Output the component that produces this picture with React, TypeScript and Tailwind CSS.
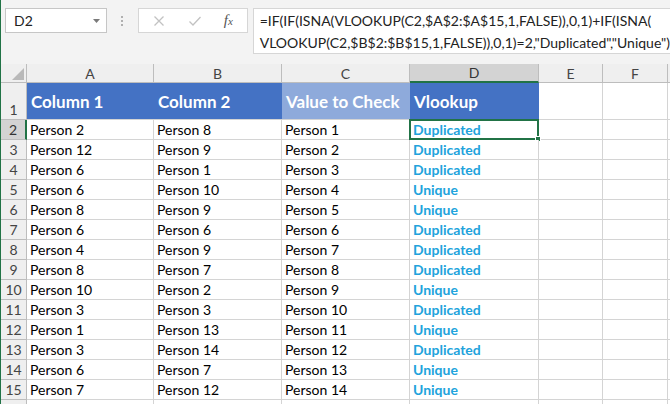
const colA = ['Person 2', 'Person 12', 'Person 6', 'Person 6', 'Person 8', 'Person 6', 'Person 4', 'Person 8', 'Person 10', 'Person 3', 'Person 1', 'Person 3', 'Person 6', 'Person 7']
const colB = ['Person 8', 'Person 9', 'Person 1', 'Person 10', 'Person 9', 'Person 6', 'Person 9', 'Person 7', 'Person 2', 'Person 3', 'Person 13', 'Person 14', 'Person 7', 'Person 12']
const colD = ['Duplicated', 'Duplicated', 'Duplicated', 'Unique', 'Unique', 'Duplicated', 'Duplicated', 'Duplicated', 'Unique', 'Duplicated', 'Unique', 'Duplicated', 'Unique', 'Unique']

const cols = ['A', 'B', 'C', 'D', 'E', 'F', '']

const cell = 'border-r border-b border-[#d4d4d4] bg-white flex items-center px-[3px] whitespace-nowrap overflow-hidden'
const rowHead = 'border-r border-b border-[#bdbdbd] bg-[#efefef] text-[#444] flex items-center justify-center text-[14px]'
const headFill = 'text-white font-bold text-[17px] flex items-center pl-[4px] pt-[1px] border-b border-[#d4d4d4] whitespace-nowrap'

function Toolbar() {
  return (
    <div className="h-[64px] flex items-start pt-[8px] pl-[4px]">
      <div className="w-[102px] h-[25px] bg-white border border-[#c6c6c6] flex items-center justify-between pl-[8px] pr-[5px] text-[14px] text-[#222]">
        <span>D2</span>
        <svg width="9" height="6" viewBox="0 0 9 6">
          <path d="M1 1 L8 1 L4.5 5 Z" fill="#7a7a7a" />
        </svg>
      </div>
      <div className="w-[31px] h-[25px] flex flex-col items-center justify-center gap-[2px]">
        <span className="w-[2px] h-[2px] bg-[#b0b0b0]" />
        <span className="w-[2px] h-[2px] bg-[#b0b0b0]" />
        <span className="w-[2px] h-[2px] bg-[#b0b0b0]" />
      </div>
      <div className="w-[110px] h-[25px] bg-white border border-[#d6d6d6] flex items-center pl-[13px]">
        <svg width="12" height="12" viewBox="0 0 12 12" className="ml-[1px]">
          <path d="M1.5 1.5 L10.5 10.5 M10.5 1.5 L1.5 10.5" stroke="#c2c2c2" strokeWidth="1.3" />
        </svg>
        <svg width="14" height="12" viewBox="0 0 14 12" className="ml-[23px]">
          <path d="M1.5 6.5 L5 10 L12.5 2" stroke="#c2c2c2" strokeWidth="1.3" fill="none" />
        </svg>
        <span className="ml-[22px] font-['Liberation_Serif',serif] italic text-[#555] text-[15px] leading-none">
          f<span className="text-[11px]">x</span>
        </span>
      </div>
      <div className="ml-[5px] flex-1 h-[46px] bg-white border-l border-y border-[#d6d6d6] pl-[6px] pt-[1px] text-[14px] leading-[22px] text-[#222] whitespace-nowrap">
        <div>=IF(IF(ISNA(VLOOKUP(C2,$A$2:$A$15,1,FALSE)),0,1)+IF(ISNA(</div>
        <div>VLOOKUP(C2,$B$2:$B$15,1,FALSE)),0,1)=2,"Duplicated","Unique")</div>
      </div>
    </div>
  )
}

export default function App() {
  return (
    <div className="w-[670px] h-[404px] overflow-hidden bg-[#f3f3f3] border-l border-[#217346] font-['Lato',sans-serif]">
      <Toolbar />
      <div className="grid grid-cols-[26px_127px_128px_128px_129px_64px_65px_40px] grid-rows-[19px_37px_repeat(15,20px)] bg-white">
        <div className="bg-[#efefef] border-r border-b border-[#bdbdbd] flex items-end justify-end p-[2px]">
          <svg width="12" height="12" viewBox="0 0 12 12">
            <path d="M12 0 L12 12 L0 12 Z" fill="#b9b9b9" />
          </svg>
        </div>
        {cols.map((c) =>
          c === 'D' ? (
            <div key={c} className="bg-[#d3d3d3] border-r border-[#bdbdbd] border-b-2 border-b-[#217346] flex items-center justify-center text-[14px] text-[#333]">
              {c}
            </div>
          ) : (
            <div key={c || 'x'} className="bg-[#efefef] border-r border-b border-[#bdbdbd] flex items-center justify-center text-[14px] text-[#444]">
              {c}
            </div>
          )
        )}

        <div className={rowHead + ' !items-end leading-[19px]'}>1</div>
        <div className={headFill + ' bg-[#4472c4]'}>Column 1</div>
        <div className={headFill + ' bg-[#4472c4]'}>Column 2</div>
        <div className={headFill + ' bg-[#8eaadb]'}>Value to Check</div>
        <div className={headFill + ' bg-[#4472c4]'}>Vlookup</div>
        <div className={cell} />
        <div className={cell} />
        <div className={cell} />

        {colA.map((a, i) => {
          const sel = i === 0
          return (
            <div key={i} className="contents">
              <div
                className={
                  sel
                    ? 'bg-[#d3d3d3] text-[#333] border-b border-[#bdbdbd] border-r-2 border-r-[#217346] flex items-center justify-center text-[14px]'
                    : rowHead
                }
              >
                {i + 2}
              </div>
              <div className={cell + ' text-[14px] text-black'}>{a}</div>
              <div className={cell + ' text-[14px] text-black'}>{colB[i]}</div>
              <div className={cell + ' text-[14px] text-black'}>Person {i + 1}</div>
              <div className={cell + ' relative overflow-visible text-[14px] font-bold text-[#21a3dc]'}>
                {colD[i]}
                {sel && (
                  <div className="absolute -left-[1px] -top-[1px] -right-[1px] -bottom-[1px] border-2 border-[#217346]">
                    <div className="absolute -right-[4px] -bottom-[4px] w-[6px] h-[6px] bg-[#217346] border border-white" />
                  </div>
                )}
              </div>
              <div className={cell} />
              <div className={cell} />
              <div className={cell} />
            </div>
          )
        })}

        <div className={rowHead} />
        <div className={cell} />
        <div className={cell} />
        <div className={cell} />
        <div className={cell} />
        <div className={cell} />
        <div className={cell} />
        <div className={cell} />
      </div>
    </div>
  )
}
